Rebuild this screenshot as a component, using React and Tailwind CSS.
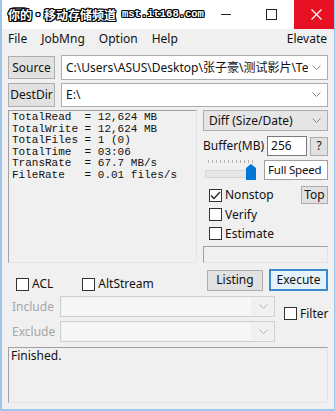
import React from "react";

const ui = { fontFamily: '"Noto Sans", "Open Sans", sans-serif' };
const mono = { fontFamily: '"Liberation Mono", "DejaVu Sans Mono", monospace' };
const outline =
  "[text-shadow:-1px_-1px_0_#000,1px_-1px_0_#000,-1px_1px_0_#000,1px_1px_0_#000,0_1px_0_#000,0_-1px_0_#000,1px_0_0_#000,-1px_0_0_#000]";

function Chevron({ className = "" }) {
  return (
    <svg width="9" height="6" viewBox="0 0 9 6" className={className}>
      <path d="M0.5 0.5 L4.5 4.5 L8.5 0.5" fill="none" stroke="#8a8a8a" strokeWidth="1" />
    </svg>
  );
}

function Check({ checked }) {
  return (
    <div className="w-[13px] h-[13px] border border-[#333] bg-white flex items-center justify-center shrink-0">
      {checked && (
        <svg width="11" height="9" viewBox="0 0 11 9">
          <path d="M1 4.5 L4 7.5 L10 1" fill="none" stroke="#222" strokeWidth="1.3" />
        </svg>
      )}
    </div>
  );
}

function Btn({ children, className = "" }) {
  return (
    <div className={`bg-[#e1e1e1] border border-[#adadad] flex items-center justify-center text-[12px] text-[#111] whitespace-nowrap ${className}`}>
      {children}
    </div>
  );
}

export default function App() {
  return (
    <div className="w-[335px] h-[411px] bg-[#f0f0f0] flex flex-col border-l-[2px] border-r-[1px] border-b-[2px] border-[#9fc6ea] overflow-hidden text-[#111]" style={ui}>
      {/* Title bar */}
      <div className="h-[29px] bg-white flex items-stretch shrink-0 relative">
        <div className="flex items-center pl-[6px] relative whitespace-nowrap shrink-0">
          <div className="absolute left-[6px] top-[7px] w-[22px] h-[15px] rounded-[6px] bg-[#444]" />
          <span
            className={`relative w-[114px] shrink-0 text-[12px] leading-[15px] font-bold text-white ${outline}`}
            style={{ fontFamily: '"Noto Sans CJK SC", sans-serif' }}
          >
            你的•移动存储频道
          </span>
          <span className={`relative shrink-0 text-[10.5px] leading-[15px] font-bold text-white ${outline}`} style={mono}>
            mst.it168.com
          </span>
        </div>
        <div className="flex-1" />
        <div className="w-[45px] flex items-center justify-center shrink-0">
          <div className="w-[10px] h-[1px] bg-[#222]" />
        </div>
        <div className="w-[45px] flex items-center justify-center shrink-0">
          <div className="w-[11px] h-[11px] border border-[#222]" />
        </div>
        <div className="w-[45px] bg-[#e81123] flex items-center justify-center shrink-0">
          <svg width="11" height="11" viewBox="0 0 11 11">
            <path d="M0.5 0.5 L10.5 10.5 M10.5 0.5 L0.5 10.5" stroke="#fff" strokeWidth="1.2" />
          </svg>
        </div>
      </div>

      {/* Menu */}
      <div className="h-[20px] flex items-center text-[12px] pl-[6px] pr-[7px] shrink-0">
        <span className="mr-[14px]">File</span>
        <span className="mr-[14px]">JobMng</span>
        <span className="mr-[14px]">Option</span>
        <span>Help</span>
        <span className="ml-auto">Elevate</span>
      </div>

      <div className="flex flex-col px-[6px] pt-[6px]">
        {/* Source row */}
        <div className="flex items-center gap-[6px] h-[25px]">
          <Btn className="w-[47px] h-[23px]">Source</Btn>
          <div className="flex-1 h-[25px] bg-white border border-[#abadb3] flex items-center pl-[4px] pr-[6px] text-[12px] overflow-hidden whitespace-nowrap">
            <span className="flex-1 overflow-hidden" style={{ fontFamily: '"Noto Sans", "Noto Sans CJK SC", sans-serif' }}>C:\Users\ASUS\Desktop\张子豪\测试影片\Te</span>
            <Chevron className="ml-[4px] shrink-0" />
          </div>
        </div>
        {/* DestDir row */}
        <div className="flex items-center gap-[6px] h-[25px] mt-[2px]">
          <Btn className="w-[47px] h-[24px]">DestDir</Btn>
          <div className="flex-1 h-[24px] bg-white border border-[#abadb3] flex items-center pl-[4px] pr-[6px] text-[12px]">
            <span className="flex-1">E:\</span>
            <Chevron />
          </div>
        </div>

        {/* Main area */}
        <div className="flex gap-[6px] mt-[3px] h-[153px]">
          <div className="w-[189px] border border-t-[#a0a0a0] border-l-[#a0a0a0] border-r-[#e3e3e3] border-b-[#e3e3e3] pl-[3px] pt-[1px] text-[11px] leading-[11.6px] whitespace-pre text-[#111]" style={mono}>
            {"TotalRead  = 12,624 MB\nTotalWrite = 12,624 MB\nTotalFiles = 1 (0)\nTotalTime  = 03:06\nTransRate  = 67.7 MB/s\nFileRate   = 0.01 files/s"}
          </div>
          <div className="flex-1 flex flex-col">
            <div className="h-[21px] bg-[#e5e5e5] border border-[#adadad] flex items-center pl-[5px] pr-[6px] text-[12px]">
              <span className="flex-1">Diff (Size/Date)</span>
              <Chevron />
            </div>
            <div className="flex items-center mt-[5px] h-[20px]">
              <span className="text-[12px] mr-[3px] whitespace-nowrap">Buffer(MB)</span>
              <div className="w-[40px] h-[20px] bg-white border border-[#7a7a7a] text-[12px] flex items-center pl-[3px]">256</div>
              <Btn className="ml-auto w-[18px] h-[19px]">?</Btn>
            </div>
            <div className="flex items-center mt-[3px] h-[22px]">
              <div className="relative w-[55px] h-[22px] shrink-0">
                <div className="absolute left-[5px] top-[1px] flex gap-[3px]">
                  {Array.from({ length: 12 }).map((_, i) => (
                    <div key={i} className="w-[1px] h-[3px] bg-[#b0b0b0]" />
                  ))}
                </div>
                <div className="absolute left-[2px] top-[11px] w-[50px] h-[8px] bg-[#e7e7e7] border border-[#d6d6d6]" />
                <svg className="absolute left-[43px] top-[5px]" width="10" height="16" viewBox="0 0 10 16">
                  <path d="M0 4 L5 0 L10 4 L10 16 L0 16 Z" fill="#0078d7" />
                </svg>
              </div>
              <div className="ml-auto w-[64px] h-[20px] bg-white border border-[#a0a0a0] text-[11.5px] tracking-[-0.2px] flex items-center pl-[3px] whitespace-nowrap overflow-hidden">Full Speed</div>
            </div>
            <div className="flex items-center mt-[5px] h-[18px] pl-[6px]">
              <Check checked />
              <span className="text-[12px] ml-[3px]">Nonstop</span>
              <Btn className="ml-auto w-[27px] h-[18px]">Top</Btn>
            </div>
            <div className="flex items-center mt-[2px] h-[17px] pl-[6px]">
              <Check />
              <span className="text-[12px] ml-[3px]">Verify</span>
            </div>
            <div className="flex items-center mt-[2px] h-[17px] pl-[6px]">
              <Check />
              <span className="text-[12px] ml-[3px]">Estimate</span>
            </div>
            <div className="mt-auto h-[17px] border border-t-[#a0a0a0] border-l-[#a0a0a0] border-r-[#e3e3e3] border-b-[#e3e3e3]" />
          </div>
        </div>

        {/* Options row */}
        <div className="flex items-center mt-[6px] h-[22px]">
          <div className="flex items-center pl-[8px] mt-[8px]">
            <Check />
            <span className="text-[12px] ml-[3px]">ACL</span>
          </div>
          <div className="flex items-center ml-[29px] mt-[8px]">
            <Check />
            <span className="text-[12px] ml-[3px]">AltStream</span>
          </div>
          <Btn className="ml-auto w-[56px] h-[21px]">Listing</Btn>
          <div className="ml-[6px] w-[59px] h-[22px] bg-[#e5f1fb] border-[2px] border-[#3d8ad0] flex items-center justify-center text-[12px]">Execute</div>
        </div>

        {/* Include/Exclude */}
        <div className="flex mt-[5px]">
          <div className="flex flex-col">
            <div className="flex items-center h-[21px]">
              <span className="w-[52px] pl-[4px] text-[12px] text-[#a6a6a6]">Include</span>
              <div className="w-[215px] h-[21px] bg-[#f0f0f0] border border-[#d0d0d0] flex items-center justify-end pr-[6px]">
                <div className="flex-1 h-[17px] bg-[#f7f7f7] ml-[1px]" />
                <Chevron className="ml-[8px] opacity-60" />
              </div>
            </div>
            <div className="flex items-center h-[21px] mt-[4px]">
              <span className="w-[52px] pl-[4px] text-[12px] text-[#a6a6a6]">Exclude</span>
              <div className="w-[215px] h-[21px] bg-[#f0f0f0] border border-[#d0d0d0] flex items-center justify-end pr-[6px]">
                <div className="flex-1 h-[17px] bg-[#f7f7f7] ml-[1px]" />
                <Chevron className="ml-[8px] opacity-60" />
              </div>
            </div>
          </div>
          <div className="flex items-center ml-[9px] mt-[9px] h-[17px] self-start">
            <Check />
            <span className="text-[12px] ml-[3px]">Filter</span>
          </div>
        </div>

        {/* Log */}
        <div className="mt-[5px] h-[56px] border border-t-[#a0a0a0] border-l-[#a0a0a0] border-r-[#e3e3e3] border-b-[#e3e3e3] pl-[2px] text-[12px] leading-[15px]">
          Finished.
        </div>
      </div>
    </div>
  );
}
